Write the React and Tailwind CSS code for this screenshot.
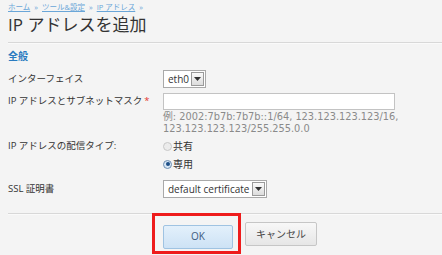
import React from 'react';

const font = { fontFamily: '"Open Sans", "Noto Sans CJK JP", sans-serif' };
const wide = { fontFamily: '"DejaVu Sans", "Noto Sans CJK JP", sans-serif' };

const Arrow = () => (
  <span className="flex h-[14px] w-[13px] items-center justify-center border border-[#9a9a9a] bg-gradient-to-b from-[#fafafa] to-[#dcdcdc]">
    <svg width="7" height="4" viewBox="0 0 7 4"><path d="M0 0h7L3.5 4z" fill="#333" /></svg>
  </span>
);

const Select = ({ value, width }) => (
  <div className={`flex h-[18px] items-center justify-between border border-[#a9a9a9] bg-white pl-[4px] pr-[1px] text-[10px] text-[#333] ${width}`}>
    <span>{value}</span>
    <Arrow />
  </div>
);

const Radio = ({ checked, label }) => (
  <div className="flex h-[18px] items-center gap-[1px] text-[10px] text-[#333]">
    <span className={`flex h-[9px] w-[9px] items-center justify-center rounded-full border ${checked ? 'border-[#6f8fb0] bg-[#d6e6f5]' : 'border-[#c8c8c8] bg-[#ececec]'}`}>
      {checked && <span className="h-[4px] w-[4px] rounded-full bg-[#1d4f86]" />}
    </span>
    <span>{label}</span>
  </div>
);

export default function App() {
  return (
    <div className="h-[255px] w-[442px] overflow-hidden bg-[#f4f4f4]" style={font}>
      <div className="pl-[8px] pt-[1px]">
        <div className="flex gap-[4px] text-[7.5px] leading-[12px] text-[#6aa6d8]">
          <span className="underline">ホーム</span><span>»</span>
          <span className="underline">ツール&設定</span><span>»</span>
          <span className="underline">IP アドレス</span><span>»</span>
        </div>
        <h1 className="mt-[1px] text-[17px] leading-[22px] text-[#333]">IP アドレスを追加</h1>
      </div>
      <div className="ml-[8px] mt-[6px] h-[2px] border-t border-[#d8d8d8] bg-[#fafafa]" />
      <div className="pl-[8px] pt-[5px] text-[10px] font-bold leading-[14px] text-[#2a7bc0]">全般</div>

      <div className="mt-[7px] grid grid-cols-[155px_1fr] gap-y-[5px] pl-[8px] text-[9.5px] text-[#333]">
        <div className="flex h-[18px] items-center">インターフェイス</div>
        <div><Select value="eth0" width="w-[43px]" /></div>

        <div className="flex h-[17px] items-center">
          IP アドレスとサブネットマスク<span className="ml-[2px] text-[#e3342f]">*</span>
        </div>
        <div>
          <div className="h-[17px] w-[232px] border border-[#c3c3c3] bg-white" />
          <div className="mb-[-3px] mt-[1px] text-[9.8px] leading-[12px] text-[#8a8a8a]" style={wide}>
            例: 2002:7b7b:7b7b::1/64, 123.123.123.123/16,<br />123.123.123.123/255.255.0.0
          </div>
        </div>

        <div className="flex h-[18px] items-center">IP アドレスの配信タイプ:</div>
        <div>
          <Radio label="共有" />
          <Radio checked label="専用" />
        </div>

        <div className="mt-[2px] flex h-[18px] items-center">SSL 証明書</div>
        <div className="mt-[2px]"><Select value="default certificate" width="w-[104px]" /></div>
      </div>

      <div className="ml-[8px] mt-[15px] h-[2px] border-t border-[#d8d8d8] bg-[#fafafa]" />

      <div className="mt-[-2px] flex items-start pl-[152px]">
        <div className="h-[41px] w-[89px] border-[3px] border-[#ee1c1c] pl-[8px] pt-[6px]">
          <button className="h-[24px] w-[70px] rounded-[2px] border border-[#9fc3e2] bg-gradient-to-b from-[#e3f0fb] to-[#cde2f5] text-[10px] text-[#3d5a80]">OK</button>
        </div>
        <button className="ml-[4px] mt-[9px] h-[24px] w-[72px] rounded-[2px] border border-[#c6c6c6] bg-gradient-to-b from-[#f8f8f8] to-[#e6e6e6] text-[10px] text-[#444]">キャンセル</button>
      </div>
    </div>
  );
}
